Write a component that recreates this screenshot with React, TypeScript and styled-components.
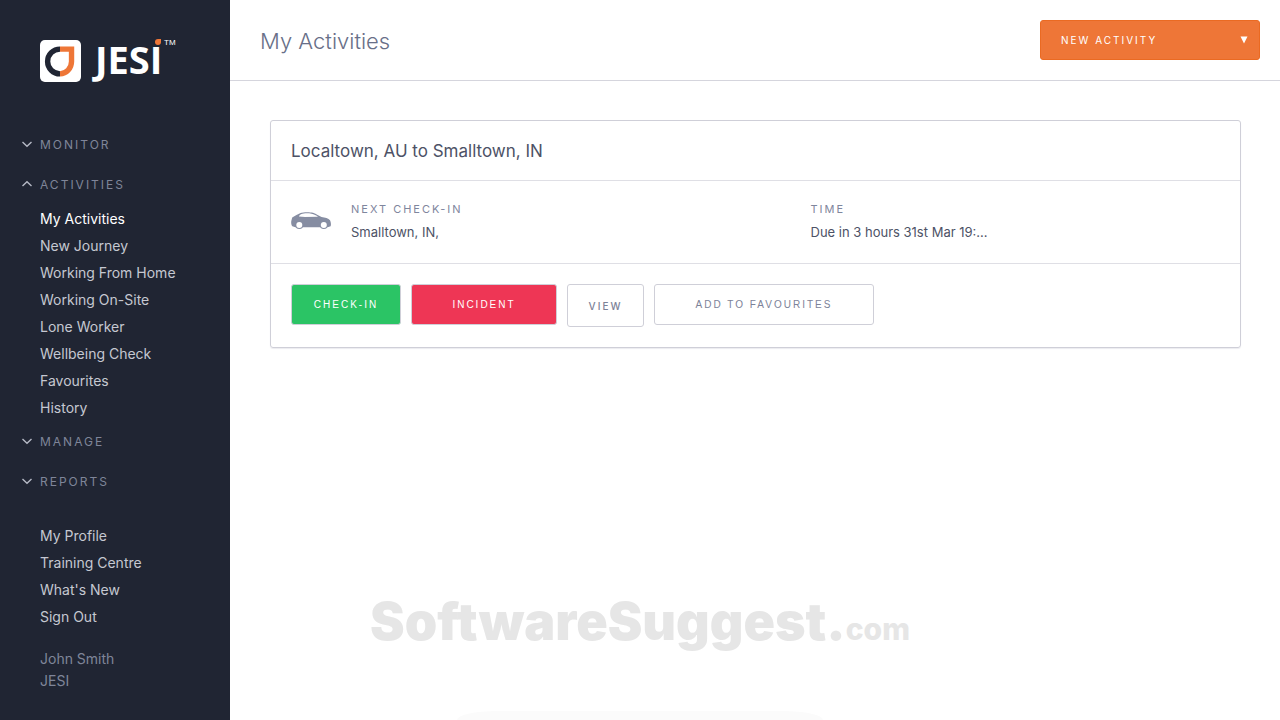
import React, { useState } from 'react';
import styled, { createGlobalStyle, css } from 'styled-components';

const sans = "Inter, 'Liberation Sans', sans-serif";
const arial = "'Liberation Sans', Arial, sans-serif";

const GlobalStyle = createGlobalStyle`
  *, *::before, *::after { box-sizing: border-box; }
  body { margin: 0; background: #fff; font-family: ${sans}; color: #4d5266; }
  ul, dl, dd, p, h1, h2 { margin: 0; padding: 0; font-weight: 400; }
  ul { list-style: none; }
  a { color: inherit; text-decoration: none; }
  button { font: inherit; border: 0; background: none; padding: 0; cursor: pointer; }
`;

const Page = styled.div`
  position: relative;
  display: flex;
  min-height: 100vh;
  overflow: hidden;
`;

const Sidebar = styled.nav`
  flex: 0 0 230px;
  padding: 0 20px 28px;
  background: #202533;
`;

const Logo = styled.a`
  position: relative;
  display: flex;
  align-items: center;
  gap: 14px;
  height: 124px;
  padding: 0 0 2px 20px;
  color: #fff;
`;

const Wordmark = styled.span`
  padding-bottom: 4px;
  font: 700 38px/40px 'Open Sans', 'Noto Sans', sans-serif;
`;

const WordmarkDot = styled.svg`
  position: absolute;
  left: 135px;
  top: 39px;
`;

const Trademark = styled.span`
  position: absolute;
  left: 144px;
  top: 37px;
  font: 400 8px/12px ${arial};
`;

const SectionToggle = styled.button`
  display: flex;
  align-items: center;
  width: 100%;
  height: 40px;
  gap: 6px;
  color: #7f8599;
  font-size: 12px;
  letter-spacing: 2px;
`;

const Chevron = styled.svg<{ $open: boolean }>`
  width: 14px;
  height: 14px;
  color: #b5b9c5;
  ${p => p.$open && css`transform: rotate(180deg);`}
`;

const Links = styled.ul<{ $spaced?: boolean }>`
  padding-left: 20px;
  margin-top: ${p => (p.$spaced ? '21px' : '1px')};
`;

const NavLink = styled.a<{ $active?: boolean }>`
  display: block;
  font-size: 14px;
  line-height: 27px;
  color: ${p => (p.$active ? '#fff' : '#c5c8d1')};
`;

const Account = styled.div`
  margin-top: 18px;
  padding-left: 20px;
  font-size: 14px;
  line-height: 22px;
  color: #7f8599;
`;

const Main = styled.main`
  flex: 1;
  min-width: 0;
`;

const Header = styled.header`
  display: flex;
  align-items: center;
  justify-content: space-between;
  padding: 20px 20px 20px 30px;
  border-bottom: 1px solid #d5d5dd;
`;

const Title = styled.h1`
  padding-top: 2px;
  font-size: 22px;
  line-height: 38px;
  font-weight: 300;
  color: #686f88;
`;

const NewActivity = styled.button`
  display: flex;
  align-items: center;
  justify-content: space-between;
  width: 220px;
  height: 40px;
  padding: 0 11px 0 20px;
  border: 1px solid #ea6a22;
  border-radius: 3px;
  background: #ee7637;
  color: #fff;
  font-size: 10px;
  letter-spacing: 2px;
`;

const Content = styled.div`
  padding: 39px 39px 40px 40px;
`;

const Card = styled.article`
  border: 1px solid #cfcfd8;
  border-radius: 3px;
  box-shadow: 0 1px 1px #ececf0;
`;

const CardTitle = styled.h2`
  padding: 2px 20px 0;
  font-size: 17px;
  line-height: 57px;
  border-bottom: 1px solid #dfdfe5;
`;

const Details = styled.div`
  display: flex;
  align-items: center;
  height: 83px;
  padding: 0 20px 2px;
  gap: 20px;
  border-bottom: 1px solid #dfdfe5;
`;

const Facts = styled.dl`
  flex: 1;
  display: grid;
  grid-template-columns: 1fr 1fr;
  column-gap: 50px;
`;

const FactLabel = styled.dt`
  font-size: 11px;
  line-height: 22px;
  letter-spacing: 2px;
  color: #7f869d;
`;

const FactValue = styled.dd`
  font-size: 13px;
  line-height: 24px;
`;

const Actions = styled.div`
  display: flex;
  align-items: flex-start;
  gap: 10px;
  padding: 20px;
`;

const tones = {
  green: { bg: '#2bc465', fg: '#fff' },
  red: { bg: '#ee3655', fg: '#fff' },
  plain: { bg: '#fff', fg: '#7c8298' },
};

const action = css<{ $tone: keyof typeof tones; $width: number }>`
  display: flex;
  align-items: center;
  justify-content: center;
  width: ${p => p.$width}px;
  height: 41px;
  border: 1px solid #cfcfd8;
  border-radius: 3px;
  background: ${p => tones[p.$tone].bg};
  color: ${p => tones[p.$tone].fg};
  font: 10px/14px ${arial};
  letter-spacing: 2px;
`;

const ActionButton = styled.button`${action}`;

const ActionLink = styled.a`
  ${action}
  height: 43px;
  font: 500 10px/14px ${sans};
`;

const Watermark = styled.p`
  position: absolute;
  left: 0;
  right: 0;
  bottom: 59px;
  text-align: center;
  font: 900 52px/64px ${sans};
  color: #e6e6e6;
  pointer-events: none;
`;

const WatermarkSuffix = styled.span`
  font-size: 30px;
  font-weight: 800;
`;

const BottomGlow = styled.div`
  position: absolute;
  left: 50%;
  bottom: 0;
  width: 366px;
  height: 9px;
  margin-left: -183px;
  border-radius: 40px 40px 0 0 / 9px 9px 0 0;
  background: #fbfbfb;
`;

const LogoMark = () => (
  <svg width="41" height="42" viewBox="0 0 42 43" aria-hidden="true">
    <rect width="42" height="43" rx="5" fill="#fff" />
    <path d="M20.500 9.300A12.700 12.700 0 0 0 20.500 34.700" fill="none" stroke="#202533" strokeWidth="5.500" />
    <path d="M20.500 9.300H32.300V22A12 12.700 0 0 1 20.500 34.700" fill="none" stroke="#ee7637" strokeWidth="5.500" />
  </svg>
);

const Car = () => (
  <svg width="40" height="18" viewBox="0 0 40 18" aria-hidden="true">
    <path
      fill="#868da2"
      fillRule="evenodd"
      d="M1.200 5.500C4 4 7 2 9.500 1C12.500 0 19 0 22 .8C25.500 2 28 4 30.500 5C34 5.600 37.500 6.300 39 8.300C40 10 40.200 13 39.600 14.200L36.700 15.200H4.400L1.300 14.300C.2 13 0 11 .3 9ZM8 4.600L14 5L27 4.700C25.500 3.500 23 2.200 20.500 1.700C16.500 1.100 12.500 1.300 10.500 2.100C9.200 2.700 8.200 3.500 8 4.600Z"
    />
    <circle cx="8.300" cy="13" r="4" fill="#868da2" />
    <circle cx="8.300" cy="13" r="3" fill="#fff" />
    <circle cx="32.800" cy="13" r="4" fill="#868da2" />
    <circle cx="32.800" cy="13" r="3" fill="#fff" />
  </svg>
);

const sections = [
  { name: 'MONITOR', links: [] },
  {
    name: 'ACTIVITIES',
    links: [
      'My Activities',
      'New Journey',
      'Working From Home',
      'Working On-Site',
      'Lone Worker',
      'Wellbeing Check',
      'Favourites',
      'History',
    ],
  },
  { name: 'MANAGE', links: [] },
  { name: 'REPORTS', links: [] },
];

const profileLinks = ['My Profile', 'Training Centre', "What's New", 'Sign Out'];

export default function App() {
  const [open, setOpen] = useState('ACTIVITIES');

  return (
    <>
      <GlobalStyle />
      <Page>
        <Sidebar>
          <Logo href="#">
            <LogoMark />
            <Wordmark>JESI</Wordmark>
            <WordmarkDot width="6" height="6" viewBox="0 0 6 6" aria-hidden="true">
              <path d="M3 0H6V3A3 3 0 1 1 3 0Z" fill="#ee7637" />
            </WordmarkDot>
            <Trademark>TM</Trademark>
          </Logo>
          {sections.map(section => (
            <div key={section.name}>
              <SectionToggle
                type="button"
                aria-expanded={open === section.name}
                onClick={() => setOpen(open === section.name ? '' : section.name)}
              >
                <Chevron $open={open === section.name} viewBox="0 0 14 14" aria-hidden="true">
                  <path d="M2.500 5L7 9.300L11.500 5" fill="none" stroke="currentColor" strokeWidth="1.400" />
                </Chevron>
                {section.name}
              </SectionToggle>
              {open === section.name && section.links.length > 0 && (
                <Links>
                  {section.links.map((link, i) => (
                    <li key={link}>
                      <NavLink href="#" $active={i === 0}>{link}</NavLink>
                    </li>
                  ))}
                </Links>
              )}
            </div>
          ))}
          <Links $spaced>
            {profileLinks.map(link => (
              <li key={link}><NavLink href="#">{link}</NavLink></li>
            ))}
          </Links>
          <Account>
            <p>John Smith</p>
            <p>JESI</p>
          </Account>
        </Sidebar>
        <Main>
          <Header>
            <Title>My Activities</Title>
            <NewActivity type="button">
              NEW ACTIVITY
              <svg width="8" height="8" viewBox="0 0 8 8" aria-hidden="true">
                <path d="M.5 .5H7.500L4 7.500Z" fill="#fff" />
              </svg>
            </NewActivity>
          </Header>
          <Content>
            <Card>
              <CardTitle>Localtown, AU to Smalltown, IN</CardTitle>
              <Details>
                <Car />
                <Facts>
                  <div>
                    <FactLabel>NEXT CHECK-IN</FactLabel>
                    <FactValue>Smalltown, IN,</FactValue>
                  </div>
                  <div>
                    <FactLabel>TIME</FactLabel>
                    <FactValue>Due in 3 hours 31st Mar 19:...</FactValue>
                  </div>
                </Facts>
              </Details>
              <Actions>
                <ActionButton type="button" $tone="green" $width={110}>CHECK-IN</ActionButton>
                <ActionButton type="button" $tone="red" $width={146}>INCIDENT</ActionButton>
                <ActionLink href="#" $tone="plain" $width={77}>VIEW</ActionLink>
                <ActionButton type="button" $tone="plain" $width={220}>ADD TO FAVOURITES</ActionButton>
              </Actions>
            </Card>
          </Content>
        </Main>
        <BottomGlow />
        <Watermark>
          SoftwareSuggest.<WatermarkSuffix>com</WatermarkSuffix>
        </Watermark>
      </Page>
    </>
  );
}
